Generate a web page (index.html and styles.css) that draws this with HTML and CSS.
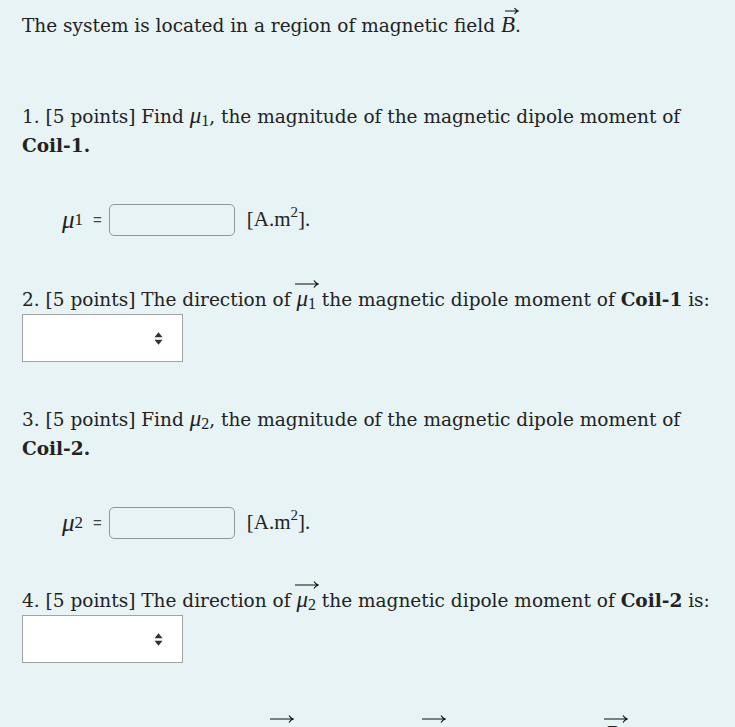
FILE: index.html
```html
<!DOCTYPE html>
<html>
<head>
<meta charset="utf-8">
<link rel="stylesheet" href="styles.css">
</head>
<body>
<div class="page">
  <p class="intro">The system is located in a region of magnetic field <span class="vec vb"><span class="mi">B</span><svg class="arr arr-b" viewBox="0 0 14 8"><path d="M0 4H13M9.5 1Q11 3.2 13.2 4Q11 4.8 9.5 7" /></svg></span>.</p>

  <p class="q q1">1. [5 points] Find <span class="mi">μ</span><span class="sub">1</span>, the magnitude of the magnetic dipole moment of <b>Coil-1.</b></p>

  <div class="ansrow">
    <span class="mi mu">μ</span><span class="sub">1</span><span class="eq">=</span>
    <span class="inp"></span>
    <span class="unit">[A.m<sup>2</sup>].</span>
  </div>

  <p class="q q2">2. [5 points] The direction of <span class="vec vm"><span class="mi">μ</span><span class="sub">1</span><svg class="arr arr-m" viewBox="0 0 24 10"><path d="M0 5H23M19 1.5Q20.5 4 23.2 5Q20.5 6 19 8.5" /></svg></span> the magnetic dipole moment of <b>Coil-1</b> is:</p>
  <div class="sel"><svg class="updown" viewBox="0 0 10 14"><path d="M5 0L9.5 5.5H0.5Z M5 14L9.5 8.5H0.5Z"/></svg></div>

  <p class="q q3">3. [5 points] Find <span class="mi">μ</span><span class="sub">2</span>, the magnitude of the magnetic dipole moment of <b>Coil-2.</b></p>

  <div class="ansrow">
    <span class="mi mu">μ</span><span class="sub">2</span><span class="eq">=</span>
    <span class="inp"></span>
    <span class="unit">[A.m<sup>2</sup>].</span>
  </div>

  <p class="q q4">4. [5 points] The direction of <span class="vec vm"><span class="mi">μ</span><span class="sub">2</span><svg class="arr arr-m" viewBox="0 0 24 10"><path d="M0 5H23M19 1.5Q20.5 4 23.2 5Q20.5 6 19 8.5" /></svg></span> the magnetic dipole moment of <b>Coil-2</b> is:</p>
  <div class="sel"><svg class="updown" viewBox="0 0 10 14"><path d="M5 0L9.5 5.5H0.5Z M5 14L9.5 8.5H0.5Z"/></svg></div>

  <p class="q last">5. [5 points] Suppose that <span class="vec vm"><span class="mi">μ</span><span class="sub">1</span><svg class="arr arr-m" viewBox="0 0 24 10"><path d="M0 5H23M19 1.5Q20.5 4 23.2 5Q20.5 6 19 8.5" /></svg></span> = 0.00 <span class="hat">î</span>, and <span class="vec vm"><span class="mi">μ</span><span class="sub">2</span><svg class="arr arr-m" viewBox="0 0 24 10"><path d="M0 5H23M19 1.5Q20.5 4 23.2 5Q20.5 6 19 8.5" /></svg></span> = 1.0 <span class="hat">î</span>, the field <span class="vec vm"><span class="mi">B</span><svg class="arr arr-m" viewBox="0 0 24 10"><path d="M0 5H23M19 1.5Q20.5 4 23.2 5Q20.5 6 19 8.5" /></svg></span></p>
</div>
</body>
</html>
```
FILE: styles.css
```css
html, body {
  margin: 0;
  padding: 0;
  background: #e7f3f5;
}
.page {
  padding: 11px 22px 0 22px;
  font-family: "DejaVu Serif", serif;
  font-size: 18.5px;
  line-height: 29px;
  color: #222;
  height: 727px;
  overflow: hidden;
  box-sizing: border-box;
}
p { margin: 0; }
b { font-weight: bold; }
.intro { margin-bottom: 62px; }
.q1, .q3 { margin-bottom: 43px; }
.mi {
  font-family: "Liberation Serif", serif;
  font-style: italic;
  font-size: 23px;
  line-height: 0;
}
.sub {
  font-family: "Liberation Serif", serif;
  font-size: 16px;
  vertical-align: -3px;
  line-height: 0;
}
.vec { position: relative; display: inline-block; line-height: 0; }
.arr {
  position: absolute;
  fill: none;
  stroke: #111;
  stroke-width: 1.2;
}
.arr-b { width: 14px; height: 8px; left: 4px; top: -18px; }
.arr-m { width: 24px; height: 10px; left: -1px; top: -20px; }
.ansrow {
  display: flex;
  align-items: center;
  padding-left: 40px;
  height: 33px;
}
.ansrow .mi { font-size: 25px; }
.ansrow .sub { margin-right: 10px; font-size: 17px; }
.eq {
  font-family: "Liberation Sans", sans-serif;
  font-size: 15px;
  color: #444;
  margin-right: 7px;
}
.inp {
  width: 124px;
  height: 30px;
  border: 1.5px solid #8a979f;
  border-radius: 5px;
}
.unit {
  font-family: "Liberation Serif", serif;
  font-size: 21px;
  margin-left: 12px;
}
.unit sup { font-size: 15px; line-height: 0; vertical-align: 9px; }
.q2 { margin-top: 49px; }
.q4 { margin-top: 47px; }
.sel {
  height: 46px;
  background: #fff;
  border: 1px solid #a3a3a3;
  display: flex;
  align-items: center;
  justify-content: flex-end;
  padding-right: 19px;
  width: 140px;
}
.updown { width: 9px; height: 13px; fill: #333; }
.q3 { margin-top: 43px; }
.last { margin-top: 57px; white-space: nowrap; }
.hat { font-family: "Liberation Serif", serif; font-style: italic; font-size: 20px; }
```
